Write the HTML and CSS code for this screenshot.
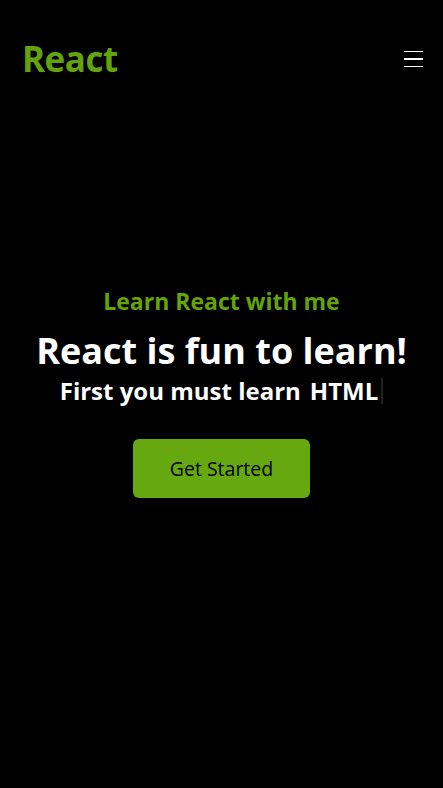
FILE: index.html
```html
<!DOCTYPE html>
<html>
<head>
<meta charset="utf-8">
<link rel="stylesheet" href="styles.css">
</head>
<body>
<header class="nav">
  <div class="logo">React</div>
  <div class="menu"><span></span><span></span><span></span></div>
</header>
<main class="hero">
  <p class="kicker">Learn React with me</p>
  <h1 class="title">React is fun to learn!</h1>
  <p class="typed">First you must learn <span class="word">HTML</span><span class="cursor"></span></p>
  <button class="cta">Get Started</button>
</main>
</body>
</html>
```
FILE: styles.css
```css
html, body { margin: 0; padding: 0; background: #000; }
body { font-family: "Open Sans", "Noto Sans", sans-serif; color: #fff; height: 788px; }
.nav { display: flex; justify-content: space-between; align-items: center; padding: 36px 20px 0 22px; height: 44px; }
.logo { color: #63a40e; font-weight: 700; font-size: 35px; letter-spacing: -0.5px; }
.menu { display: flex; flex-direction: column; gap: 6px; width: 19px; margin-top: 2px; }
.menu span { display: block; height: 1.5px; background: #fff; }
.hero { display: flex; flex-direction: column; align-items: center; padding-top: 205px; }
.kicker { margin: 0; color: #63a40e; font-weight: 700; font-size: 23px; }
.title { margin: 9px 0 0; font-size: 36px; font-weight: 700; }
.typed { margin: -1px 0 0; font-size: 24px; font-weight: 700; display: flex; align-items: center; }
.word { margin-left: 9px; }
.cursor { display: inline-block; width: 2px; height: 26px; background: #222; margin-left: 3px; }
.cta { margin-top: 32px; width: 177px; height: 59px; border: none; border-radius: 6px; background: #66a80f; color: #000; font-family: inherit; font-size: 19.5px; }
```
